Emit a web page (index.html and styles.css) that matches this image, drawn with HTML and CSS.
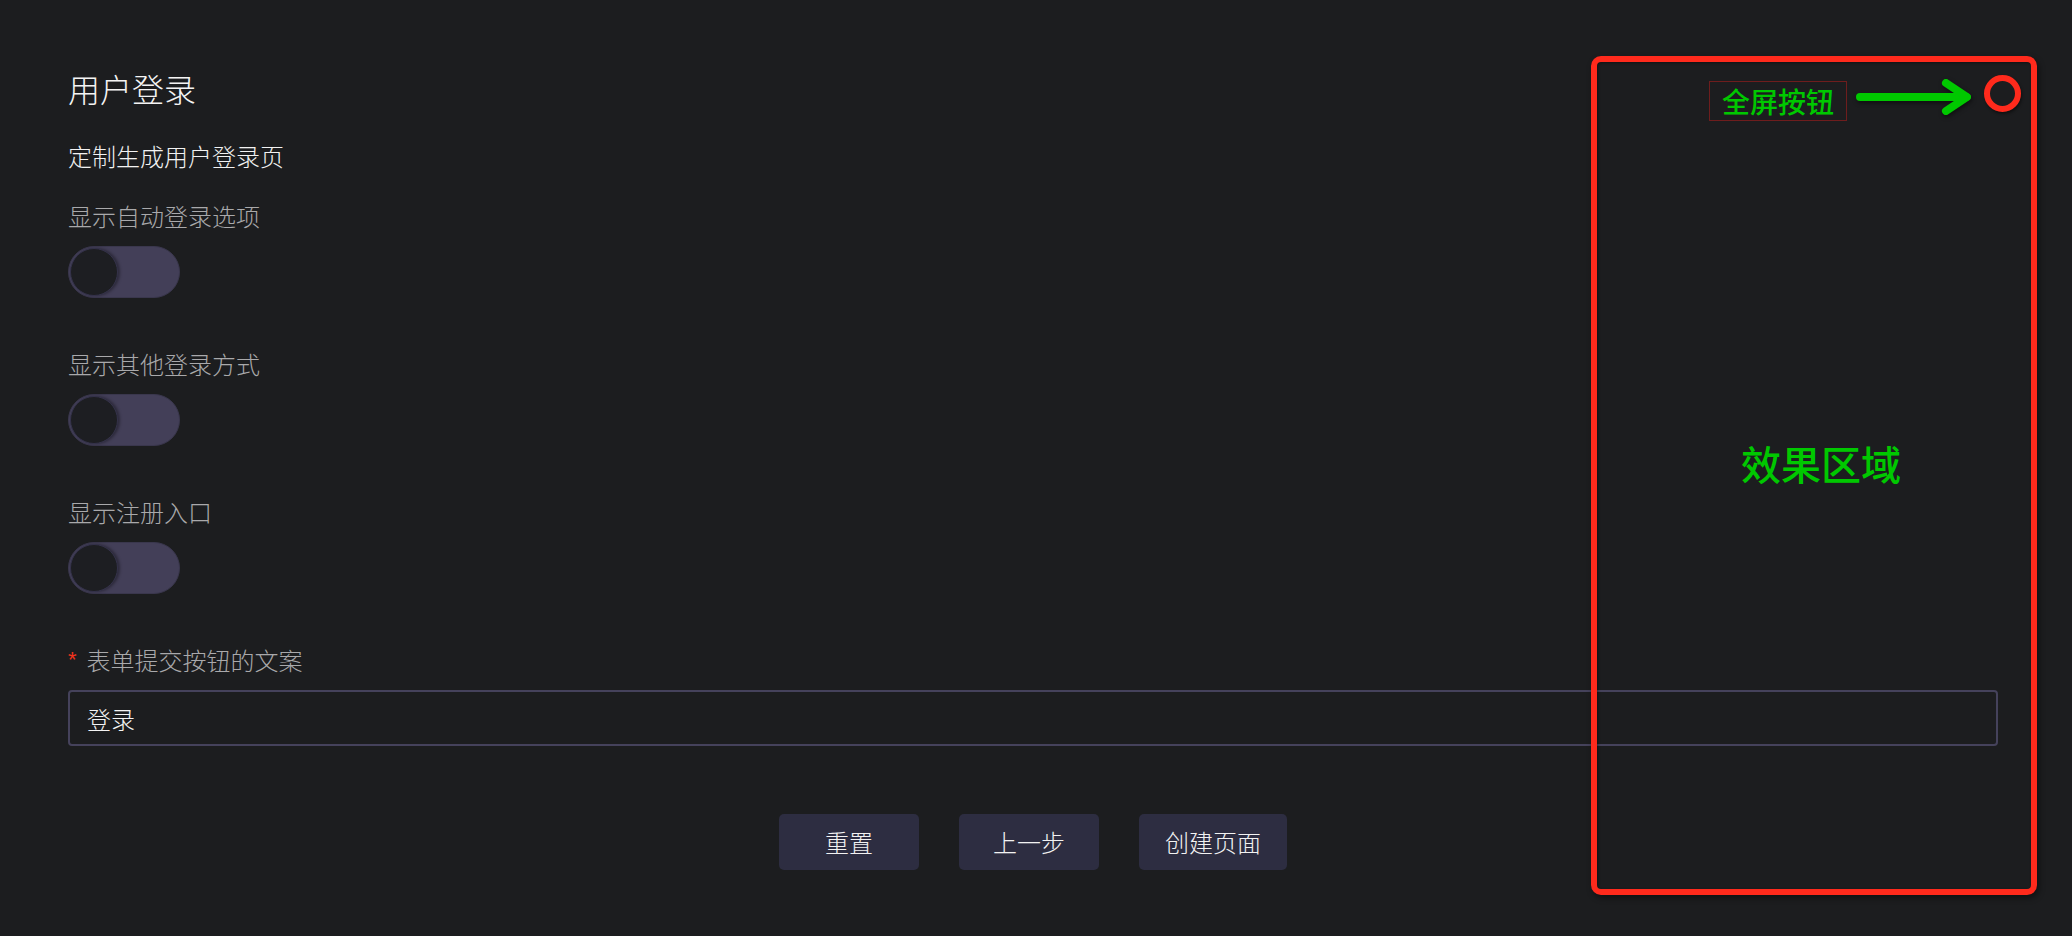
FILE: index.html
```html
<!DOCTYPE html>
<html lang="zh-CN">
<head>
<meta charset="utf-8">
<title>用户登录</title>
<link rel="stylesheet" href="styles.css">
</head>
<body>
<main class="page">
  <h1 class="title">用户登录</h1>
  <h2 class="subtitle">定制生成用户登录页</h2>

  <div class="field first">
    <div class="label">显示自动登录选项</div>
    <div class="switch"><span class="knob"></span></div>
  </div>
  <div class="field">
    <div class="label">显示其他登录方式</div>
    <div class="switch"><span class="knob"></span></div>
  </div>
  <div class="field">
    <div class="label">显示注册入口</div>
    <div class="switch"><span class="knob"></span></div>
  </div>
  <div class="field">
    <div class="label"><span class="req">*</span>表单提交按钮的文案</div>
    <div class="input">登录</div>
  </div>

  <div class="actions">
    <button class="btn">重置</button>
    <button class="btn">上一步</button>
    <button class="btn">创建页面</button>
  </div>
</main>

<div class="preview">
  <div class="note">全屏按钮</div>
  <svg class="arrow" width="120" height="40" viewBox="0 0 120 40">
    <g fill="none" stroke="#00c800" stroke-width="8" stroke-linecap="round" stroke-linejoin="round">
      <path d="M5 19 H111"/>
      <path d="M91 5 L112 19 L91 33"/>
    </g>
  </svg>
  <span class="fs-btn"></span>
  <div class="area-text">效果区域</div>
</div>
</body>
</html>
```

FILE: styles.css
```css
* { box-sizing: border-box; }

html, body {
  margin: 0;
  padding: 0;
  background: #1c1d1f;
  width: 2072px;
  height: 936px;
  overflow: hidden;
  font-family: "Noto Sans CJK SC", "Noto Sans", sans-serif;
  font-weight: 300;
}

.page {
  padding: 64px 74px 0 68px;
  display: flex;
  flex-direction: column;
}

.title {
  margin: 0;
  font-size: 32px;
  line-height: 48px;
  font-weight: 300;
  color: #f4f4f4;
}

.subtitle {
  margin: 26px 0 0;
  font-size: 24px;
  line-height: 36px;
  font-weight: 300;
  color: #f2f2f2;
}

.field {
  display: flex;
  flex-direction: column;
  align-items: flex-start;
  margin-top: 48px;
}
.field.first { margin-top: 24px; }

.label {
  font-size: 24px;
  line-height: 36px;
  color: #a9a9ab;
  display: flex;
  align-items: center;
}

.req {
  font-family: "Liberation Sans", sans-serif;
  font-weight: 400;
  color: #f2331c;
  font-size: 22px;
  margin-right: 10px;
}

.switch {
  margin-top: 12px;
  width: 112px;
  height: 52px;
  border-radius: 26px;
  background: #433f58;
  border: 1px solid #3a374d;
  display: flex;
  align-items: center;
  padding-left: 1px;
}

.knob {
  width: 48px;
  height: 48px;
  border-radius: 50%;
  background: #1d1e22;
  border: 1px solid #34324a;
  box-shadow: 2px 0 3px rgba(0, 0, 0, 0.35);
}

.input {
  margin-top: 12px;
  width: 100%;
  height: 56px;
  border: 2px solid #45425b;
  border-radius: 4px;
  padding-left: 17px;
  display: flex;
  align-items: center;
  font-size: 24px;
  color: #f4f4f4;
}

.actions {
  margin-top: 68px;
  display: flex;
  justify-content: center;
  gap: 40px;
}

.btn {
  height: 56px;
  min-width: 140px;
  padding: 0 26px;
  border: 0;
  border-radius: 5px;
  background: #2d2d41;
  color: #f2f2f2;
  font-family: "Noto Sans CJK SC", sans-serif;
  font-weight: 300;
  font-size: 24px;
  line-height: 56px;
}

/* annotation overlay */
.preview {
  position: absolute;
  left: 1591px;
  top: 56px;
  width: 446px;
  height: 839px;
  border: 6px solid #ff2a1c;
  border-radius: 10px;
  box-shadow: 2px 3px 6px rgba(0, 0, 0, 0.45), inset 1px 1px 3px rgba(0, 0, 0, 0.4);
}

.note {
  position: absolute;
  left: 112px;
  top: 19px;
  width: 138px;
  height: 40px;
  border: 1px solid #6e1d1d;
  color: #00c800;
  font-size: 28px;
  font-weight: 500;
  line-height: 38px;
  text-align: center;
}

.arrow {
  position: absolute;
  left: 258px;
  top: 16px;
  filter: drop-shadow(1px 2px 2px rgba(0, 0, 0, 0.5));
}

.fs-btn {
  position: absolute;
  left: 387px;
  top: 13px;
  width: 37px;
  height: 37px;
  border: 6px solid #ff2a1c;
  border-radius: 50%;
  box-shadow: 1px 2px 3px rgba(0, 0, 0, 0.45);
}

.area-text {
  position: absolute;
  left: 144px;
  top: 373px;
  font-size: 40px;
  line-height: 56px;
  font-weight: 500;
  color: #00c800;
  white-space: nowrap;
}
```
